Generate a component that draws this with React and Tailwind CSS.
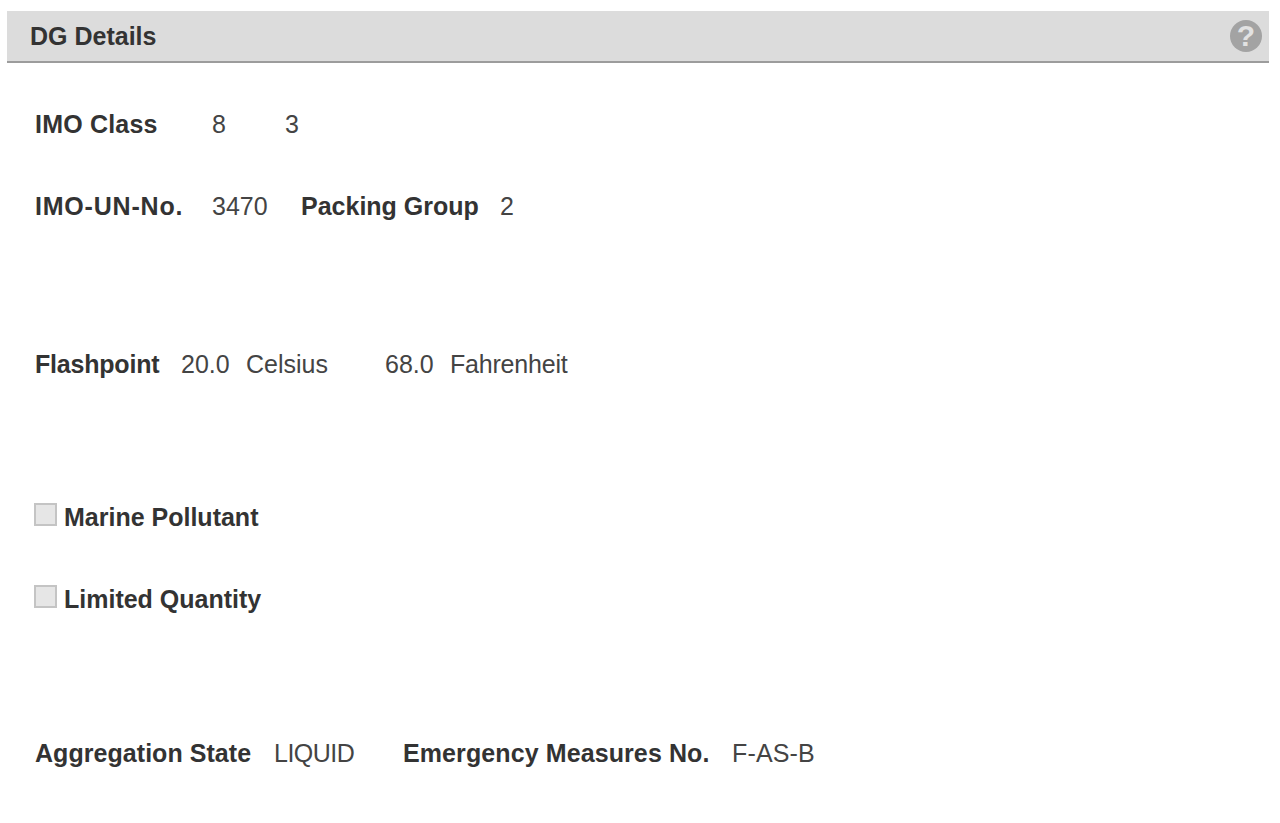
import React from 'react';

const Label = ({ children, className = '' }) => (
  <span className={`font-bold ${className}`}>{children}</span>
);

const Value = ({ children, className = '' }) => (
  <span className={`text-[#444444] ${className}`}>{children}</span>
);

const CheckRow = ({ label, className = '' }) => (
  <div className={`flex h-7 items-center ${className}`}>
    <span className="h-[23px] w-[23px] shrink-0 -translate-x-px -translate-y-[2px] border-2 border-[#c4c4c4] bg-[#e6e6e6]" />
    <Label className="ml-[6px]">{label}</Label>
  </div>
);

const App = () => {
  return (
    <div className="h-[823px] w-[1280px] bg-white pt-[11px] pl-[7px] font-['Liberation_Sans',Arial,sans-serif] text-[25px] leading-7 text-[#333333]">
      <div className="w-[1262px]">
        <div className="flex h-[51.5px] items-center justify-between border-b-2 border-[#9c9c9c] bg-[#dcdcdc] pr-[7px] pl-[23px]">
          <h2 className="font-bold">DG Details</h2>
          <div className="flex h-8 w-8 items-center justify-center rounded-full bg-[#a3a3a3] text-[30px] font-bold text-[#e2e2e2]">
            ?
          </div>
        </div>

        <div className="pl-[28px]">
          <div className="mt-[47px] flex h-7 items-center">
            <Label className="w-[177px] tracking-[0.2px]">IMO Class</Label>
            <Value className="w-[73px]">8</Value>
            <Value>3</Value>
          </div>

          <div className="mt-[54px] flex h-7 items-center">
            <Label className="w-[177px] tracking-[0.8px]">IMO-UN-No.</Label>
            <Value className="w-[89px]">3470</Value>
            <Label className="w-[199px]">Packing Group</Label>
            <Value>2</Value>
          </div>

          <div className="mt-[130px] flex h-7 items-center">
            <Label className="w-[146px] tracking-[-0.2px]">Flashpoint</Label>
            <Value className="w-[65px]">20.0</Value>
            <Value className="w-[139px]">Celsius</Value>
            <Value className="w-[65px]">68.0</Value>
            <Value className="tracking-[-0.2px]">Fahrenheit</Value>
          </div>

          <CheckRow label="Marine Pollutant" className="mt-[125px]" />
          <CheckRow label="Limited Quantity" className="mt-[54px]" />

          <div className="mt-[126px] flex h-7 items-center">
            <Label className="w-[239px] tracking-[0.05px]">Aggregation State</Label>
            <Value className="w-[129px] tracking-[-0.5px]">LIQUID</Value>
            <Label className="w-[329px] tracking-[0.1px]">Emergency Measures No.</Label>
            <Value className="tracking-[0.15px]">F-AS-B</Value>
          </div>
        </div>
      </div>
    </div>
  );
};

export default App;
